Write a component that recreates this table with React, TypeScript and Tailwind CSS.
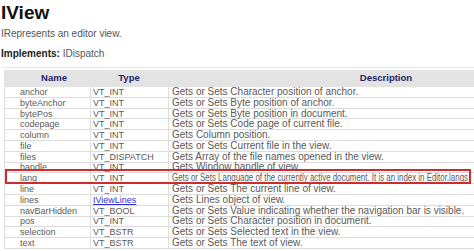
import React from "react";

const rows: [string, string, string][] = [
  ["anchor", "VT_INT", "Gets or Sets Character position of anchor."],
  ["byteAnchor", "VT_INT", "Gets or Sets Byte position of anchor."],
  ["bytePos", "VT_INT", "Gets or Sets Byte position in document."],
  ["codepage", "VT_INT", "Gets or Sets Code page of current file."],
  ["column", "VT_INT", "Gets Column position."],
  ["file", "VT_INT", "Gets or Sets Current file in the view."],
  ["files", "VT_DISPATCH", "Gets Array of the file names opened in the view."],
  ["handle", "VT_INT", "Gets Window handle of view."],
  ["lang", "VT_INT", "Gets or Sets Language of the currently active document. It is an index in Editor.langs"],
  ["line", "VT_INT", "Gets or Sets The current line of view."],
  ["lines", "IViewLines", "Gets Lines object of view."],
  ["navBarHidden", "VT_BOOL", "Gets or Sets Value indicating whether the navigation bar is visible."],
  ["pos", "VT_INT", "Gets or Sets Character position in document."],
  ["selection", "VT_BSTR", "Gets or Sets Selected text in the view."],
  ["text", "VT_BSTR", "Gets or Sets The text of view."],
];

export default function App() {
  return (
    <div
      className="w-[474px] h-[251px] overflow-hidden bg-white relative"
      style={{ fontFamily: '"Liberation Sans", Arial, sans-serif' }}
    >
      <div className="pl-[1px] pt-[3px]">
        <div className="text-[19px] font-bold leading-[20px] text-[#111]">IView</div>
        <div className="mt-[5px] text-[10px] leading-[12px] text-[#555]">IRepresents an editor view.</div>
        <div className="mt-[8px] text-[10px] leading-[12px] text-[#555]">
          <span className="font-bold text-[#222]">Implements:</span> IDispatch
        </div>
      </div>
      <div className="mt-[7px] ml-[2px] w-[700px] h-px bg-[#e6e6e6]" />
      <div className="mt-[2px] ml-[4px] w-[600px] text-[10px] text-[#5a5a5a]">
        <div className="flex h-[17px] items-center bg-[#e3e3e3] font-bold text-[#23236b] text-[9.5px]">
          <div className="w-[86px] text-center pl-[14px]">Name</div>
          <div className="w-[78px] text-center">Type</div>
          <div className="flex-1 text-center">Description</div>
        </div>
        <div className="border-l border-[#ddd]">
          {rows.map(([n, t, d]) => {
            const hl = n === "lang";
            return (
              <div
                key={n}
                className="flex h-[10.8px] items-center leading-[10px] border-b border-[#dcdcdc] relative"
              >
                <div className="w-[86px] pl-[15px] border-r border-[#ddd] h-full flex items-center text-[9px]">{n}</div>
                <div className="w-[78px] pl-[2px] border-r border-[#ddd] h-full flex items-center text-[9px]">
                  {t === "IViewLines" ? (
                    <span className="text-[#3333cc] underline">{t}</span>
                  ) : (
                    t
                  )}
                </div>
                <div className="flex-1 pl-[3px] whitespace-nowrap">
                  {hl ? (
                    <span className="inline-block origin-left scale-x-[0.79]">{d}</span>
                  ) : (
                    d
                  )}
                </div>
                {hl && (
                  <div className="absolute left-[0px] top-[-4px] w-[466px] h-[15px] border-2 border-[#d02a2e]" />
                )}
              </div>
            );
          })}
        </div>
      </div>
    </div>
  );
}
